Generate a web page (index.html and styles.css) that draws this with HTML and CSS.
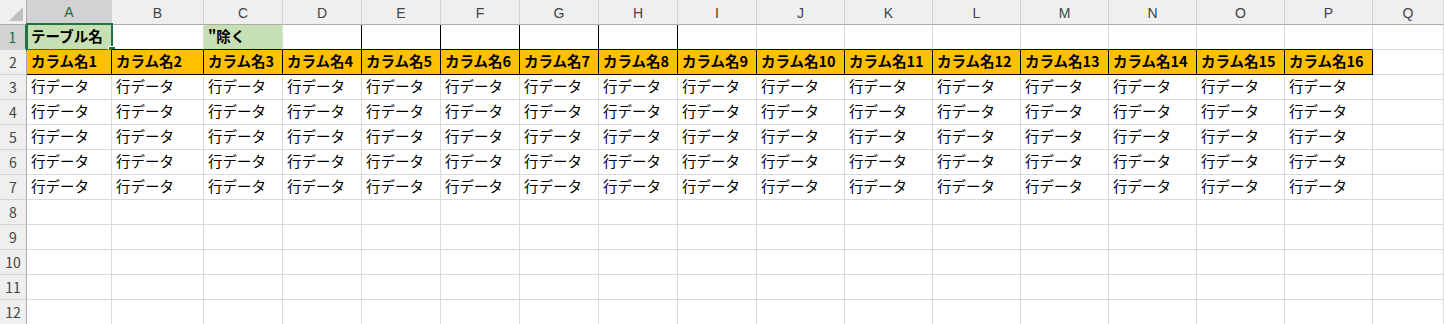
FILE: index.html
```html
<!DOCTYPE html>
<html lang="ja">
<head>
<meta charset="utf-8">
<title>Sheet</title>
<link rel="stylesheet" href="styles.css">
</head>
<body>
<div class="sheet" id="sheet">
  <div class="corner"><svg class="tri" width="14" height="14" viewBox="0 0 14 14"><polygon points="14,0 14,14 0,14" fill="#bfbfbf"/></svg></div>
  <div class="ch sel">A</div><div class="ch">B</div><div class="ch">C</div><div class="ch">D</div><div class="ch">E</div><div class="ch">F</div><div class="ch">G</div><div class="ch">H</div><div class="ch">I</div><div class="ch">J</div><div class="ch">K</div><div class="ch">L</div><div class="ch">M</div><div class="ch">N</div><div class="ch">O</div><div class="ch">P</div><div class="ch last">Q</div>

  <div class="rh sel">1</div>
  <div class="c r1 green b active">テーブル名<span class="selbox"><span class="handle"></span></span></div>
  <div class="c r1"></div>
  <div class="c r1 green b">"除く</div>
  <div class="c r1 vb"></div><div class="c r1 vb"></div><div class="c r1 vb"></div><div class="c r1 vb"></div><div class="c r1 vb"></div>
  <div class="c r1"></div><div class="c r1"></div><div class="c r1"></div><div class="c r1"></div><div class="c r1"></div><div class="c r1"></div><div class="c r1"></div><div class="c r1"></div>
  <div class="c"></div>

  <div class="rh">2</div>
  <div class="c hd">カラム名1</div><div class="c hd">カラム名2</div><div class="c hd">カラム名3</div><div class="c hd">カラム名4</div><div class="c hd">カラム名5</div><div class="c hd">カラム名6</div><div class="c hd">カラム名7</div><div class="c hd">カラム名8</div><div class="c hd">カラム名9</div><div class="c hd">カラム名10</div><div class="c hd">カラム名11</div><div class="c hd">カラム名12</div><div class="c hd">カラム名13</div><div class="c hd">カラム名14</div><div class="c hd">カラム名15</div><div class="c hd">カラム名16</div>
  <div class="c"></div>
</div>
<script src="app.js"></script>
</body>
</html>
```

FILE: app.js
```js
(function () {
  var sheet = document.getElementById('sheet');
  var html = '';
  for (var r = 3; r <= 12; r++) {
    html += '<div class="rh">' + r + '</div>';
    for (var c = 0; c < 17; c++) {
      var txt = (r <= 7 && c < 16) ? '行データ' : '';
      html += '<div class="c">' + txt + '</div>';
    }
  }
  sheet.insertAdjacentHTML('beforeend', html);
})();
```

FILE: styles.css
```css
html, body {
  margin: 0;
  padding: 0;
  background: #ffffff;
  overflow: hidden;
}
body {
  width: 1444px;
  height: 324px;
}
.sheet {
  display: grid;
  grid-template-columns: 27px 85px 92px 79px 79px 79px 79px 79px 79px 79px 88px 88px 88px 88px 88px 88px 88px 71px;
  grid-auto-rows: 25px;
  font-family: "Noto Sans CJK JP", "Noto Sans", sans-serif;
  font-size: 14.5px;
  color: #000;
}
.corner {
  background: #efefef;
  border-right: 1px solid #ababab;
  border-bottom: 1px solid #ababab;
  box-sizing: border-box;
  position: relative;
}
.tri {
  position: absolute;
  right: 3px;
  bottom: 3px;
}
.ch {
  background: #efefef;
  border-right: 1px solid #d4d4d4;
  border-bottom: 1px solid #ababab;
  box-sizing: border-box;
  display: flex;
  align-items: center;
  justify-content: center;
  font-family: "Liberation Sans", "Noto Sans", sans-serif;
  font-size: 14px;
  color: #444;
  padding-top: 1px;
}
.ch.sel {
  background: #d2d2d2;
  color: #1d6b40;
  border-bottom: 2px solid #217346;
}
.rh {
  background: #efefef;
  border-right: 1px solid #ababab;
  border-bottom: 1px solid #d4d4d4;
  box-sizing: border-box;
  display: flex;
  align-items: center;
  justify-content: center;
  font-family: "Noto Sans CJK JP", sans-serif;
  font-size: 14px;
  color: #444;
}
.rh.sel {
  background: #d2d2d2;
  color: #1d6b40;
  border-right: 2px solid #217346;
}
.c {
  border-right: 1px solid #dadada;
  border-bottom: 1px solid #dadada;
  box-sizing: border-box;
  padding-left: 4px;
  display: flex;
  align-items: center;
  white-space: nowrap;
  overflow: visible;
  line-height: 1;
  padding-bottom: 1px;
  position: relative;
}
.c.r1 {
  border-bottom-color: #000;
}
.c.vb {
  border-right-color: #000;
}
.c.green {
  background: #c6e0b4;
}
.b {
  font-weight: bold;
}
.c.hd {
  background: #ffc000;
  font-weight: bold;
  border-right-color: #000;
  border-bottom-color: #000;
}
.c.hd:first-of-type {
  border-left: 1px solid #000;
}
.selbox {
  position: absolute;
  left: -1px;
  top: -2px;
  right: -2px;
  bottom: -2px;
  border: 2px solid #217346;
  pointer-events: none;
}
.handle {
  position: absolute;
  right: -5px;
  bottom: -5px;
  width: 6px;
  height: 6px;
  background: #217346;
  border: 1px solid #fff;
}
```
